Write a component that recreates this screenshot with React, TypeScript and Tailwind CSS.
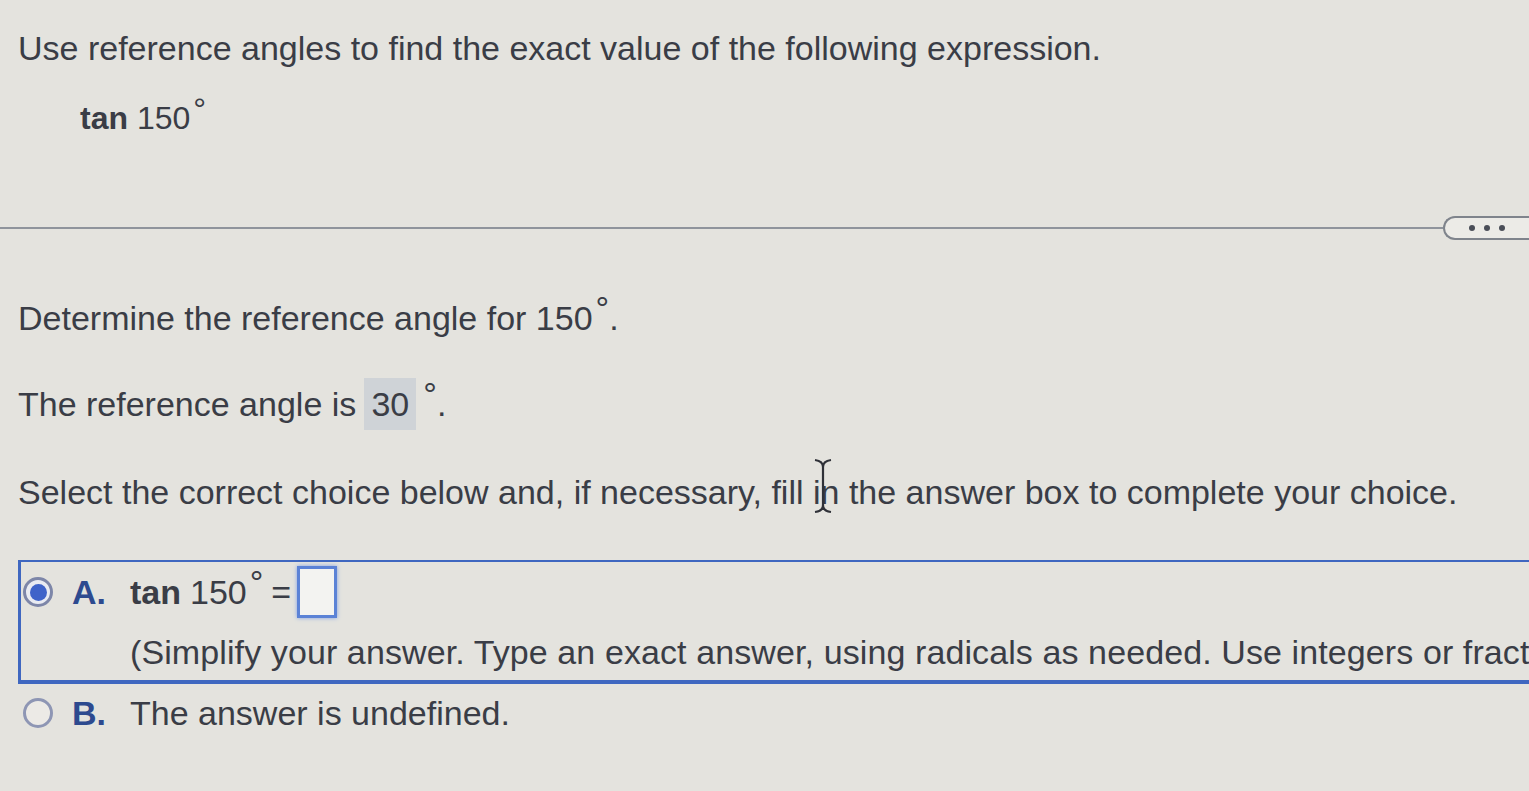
import React from 'react'

const Deg = () => <span className="relative -top-[0.28em] ml-[3px]">°</span>

const Radio = ({ checked }: { checked?: boolean }) => (
  <span
    className={`flex h-[30px] w-[30px] shrink-0 items-center justify-center rounded-full border-[3px] ${
      checked ? 'border-[#7d86a8] bg-[#e9ebf2]' : 'border-[#8e96b4] bg-[#eceae6]'
    }`}
  >
    {checked && <span className="h-[17px] w-[17px] rounded-full bg-[#3f63c9]" />}
  </span>
)

const Cursor = () => (
  <svg
    className="absolute -left-[2px] -top-[16px]"
    width="24"
    height="58"
    viewBox="0 0 24 58"
    fill="none"
    stroke="#2f3138"
    strokeWidth="2.2"
  >
    <path d="M4 3 Q12 4 12 10 Q12 4 20 3" />
    <path d="M12 10 L12 48" />
    <path d="M4 55 Q12 54 12 48 Q12 54 20 55" />
  </svg>
)

export default function App() {
  return (
    <div
      className="h-[791px] w-[1529px] overflow-hidden bg-[#e4e3de] text-[34px] leading-[40px] text-[#3a3d46]"
      style={{ fontFamily: '"Liberation Sans", Arial, sans-serif' }}
    >
      <div className="pl-[18px] pt-[28px]">
        Use reference angles to find the exact value of the following expression.
      </div>

      <div className="mt-[30px] pl-[80px] text-[32px]">
        <span className="font-bold">tan</span> 150
        <Deg />
      </div>

      {/* divider with more button */}
      <div className="mt-[78px] flex items-center">
        <div className="h-[2px] flex-1 bg-[#8f949c]" />
        <div className="flex h-[24px] w-[86px] items-center justify-center gap-[9px] rounded-l-full border-[2px] border-r-0 border-[#7f848c] bg-[#ecebe7]">
          <span className="h-[6px] w-[6px] rounded-full bg-[#4a4e58]" />
          <span className="h-[6px] w-[6px] rounded-full bg-[#4a4e58]" />
          <span className="h-[6px] w-[6px] rounded-full bg-[#4a4e58]" />
        </div>
      </div>

      <div className="mt-[58px] pl-[18px]">
        Determine the reference angle for 150
        <Deg />.
      </div>

      <div className="mt-[40px] flex items-center pl-[18px]">
        <span>The reference angle is</span>
        <span className="ml-[8px] flex h-[52px] w-[52px] items-center justify-center bg-[#cfd3d7]">30</span>
        <span className="ml-[4px]">
          <Deg />.
        </span>
      </div>

      <div className="mt-[42px] whitespace-nowrap pl-[18px]">
        Select the correct choice below and, if necessary, fill{' '}
        <span className="relative">
          in
          <Cursor />
        </span>{' '}
        the answer box to complete your choice.
      </div>

      {/* choice A, selected */}
      <div className="ml-[18px] mt-[48px] border-l-[3px] border-t-[2px] border-b-[4px] border-[#3f67c0] pb-[8px] pt-[4px]">
        <div className="flex h-[52px] items-center">
          <div className="flex w-[109px] items-center gap-[19px] pl-[2px]">
            <Radio checked />
            <span className="font-bold text-[#2d4a8f]">A.</span>
          </div>
          <div className="flex items-center">
            <span className="font-bold">tan</span>
            <span className="ml-[9px]">150</span>
            <Deg />
            <span className="ml-[8px]">=</span>
            <span className="ml-[6px] h-[52px] w-[40px] border-[3px] border-[#5b82d6] bg-[#f3f3f1] shadow-[0_0_4px_#7fa0e6]" />
          </div>
        </div>
        <div className="mt-[14px] whitespace-nowrap pl-[109px] tracking-[0.1px]">
          (Simplify your answer. Type an exact answer, using radicals as needed. Use integers or fract
        </div>
      </div>

      {/* choice B */}
      <div className="ml-[18px] mt-[9px] flex items-center">
        <div className="flex w-[112px] items-center gap-[19px] pl-[5px]">
          <Radio />
          <span className="font-bold text-[#2d4a8f]">B.</span>
        </div>
        <span>The answer is undefined.</span>
      </div>
    </div>
  )
}
